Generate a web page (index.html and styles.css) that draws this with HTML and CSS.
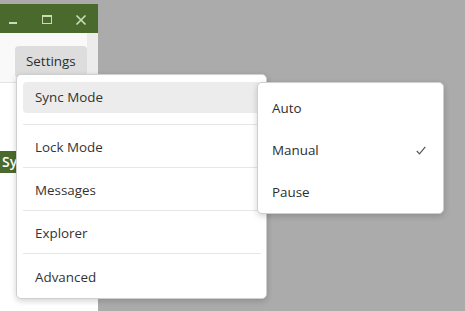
FILE: index.html
```html
<!DOCTYPE html>
<html>
<head>
<meta charset="utf-8">
<link rel="stylesheet" href="styles.css">
</head>
<body>
<div class="desk">
  <div class="app">
    <div class="titlebar">
      <svg class="tb-icon" width="98" height="29" viewBox="0 0 98 29">
        <rect x="9" y="18" width="8" height="2" fill="#c9dcb6"/>
        <rect x="42.5" y="11.5" width="9" height="8" fill="none" stroke="#c9dcb6" stroke-width="1"/>
        <rect x="42" y="11" width="10" height="2" fill="#c9dcb6"/>
        <path d="M76.5 11.5 L85.5 20.5 M85.5 11.5 L76.5 20.5" stroke="#c9dcb6" stroke-width="1.7"/>
      </svg>
    </div>
    <div class="toolbar">
      <div class="settings-btn">Settings</div>
      <div class="edge"></div>
    </div>
    <div class="content">
      <div class="tab">Sy</div>
    </div>
  </div>
</div>

<div class="menu">
  <div class="item first">Sync Mode</div>
  <div class="item sep">Lock Mode</div>
  <div class="item sep">Messages</div>
  <div class="item sep">Explorer</div>
  <div class="item sep last">Advanced</div>
</div>

<div class="submenu">
  <div class="sub-item">Auto</div>
  <div class="sub-item">Manual
    <svg class="check" width="10" height="9" viewBox="0 0 10 9"><path d="M0.8 5 L3.5 7.8 L9.3 0.8" fill="none" stroke="#555" stroke-width="1.2"/></svg>
  </div>
  <div class="sub-item">Pause</div>
</div>
</body>
</html>
```
FILE: styles.css
```css
* { box-sizing: border-box; }
html, body {
  margin: 0;
  padding: 0;
  width: 465px;
  height: 311px;
  overflow: hidden;
  background: #ababab;
  font-family: "Open Sans", "Noto Sans", sans-serif;
  font-size: 13.4px;
  color: #2e2e2e;
}
.desk {
  display: flex;
  padding-top: 4px;
  height: 311px;
}
.app {
  width: 98px;
  height: 307px;
  background: #fff;
  display: flex;
  flex-direction: column;
}
.titlebar {
  height: 29px;
  background: #4a6a2d;
}
.tb-icon { display: block; }
.toolbar {
  height: 50px;
  background: #f9f9f9;
  border-bottom: 1px solid #e4e4e4;
  display: flex;
  padding-top: 13px;
  padding-left: 15px;
}
.settings-btn {
  width: 72px;
  height: 32px;
  background: #dddddd;
  border-radius: 4px;
  padding-left: 11px;
  line-height: 31px;
  color: #2e2e2e;
}
.edge {
  margin-left: auto;
  width: 11px;
  margin-top: -13px;
  background: #ececec;
}
.content {
  flex: 1;
  padding-top: 68px;
}
.tab {
  width: 30px;
  height: 22px;
  background: #4a6a2d;
  color: #fff;
  font-weight: 600;
  font-size: 14px;
  line-height: 22px;
  padding-left: 2px;
}
.menu {
  position: absolute;
  left: 16px;
  top: 74px;
  width: 251px;
  height: 225px;
  background: #fff;
  border: 1px solid #cfcfcf;
  border-radius: 5px;
  box-shadow: 0 2px 6px rgba(0,0,0,0.18);
  padding: 7px 5px 0 6px;
}
.item {
  height: 43px;
  line-height: 43px;
  padding-left: 12px;
  color: #333;
}
.item.first {
  height: 31px;
  line-height: 31px;
  background: #ececec;
  border-radius: 4px;
  margin-bottom: 11px;
}
.item.sep {
  border-top: 1px solid #e6e6e6;
  line-height: 44px;
}
.item.last {
  line-height: 47px;
}
.submenu {
  position: absolute;
  left: 257px;
  top: 82px;
  width: 187px;
  height: 132px;
  background: #fff;
  border: 1px solid #cfcfcf;
  border-radius: 5px;
  box-shadow: 0 2px 6px rgba(0,0,0,0.18);
  padding: 4px 0 0 14px;
}
.sub-item {
  height: 42px;
  line-height: 42px;
  color: #2e2e2e;
  position: relative;
}
.check {
  position: absolute;
  left: 144px;
  top: 17px;
}
```
